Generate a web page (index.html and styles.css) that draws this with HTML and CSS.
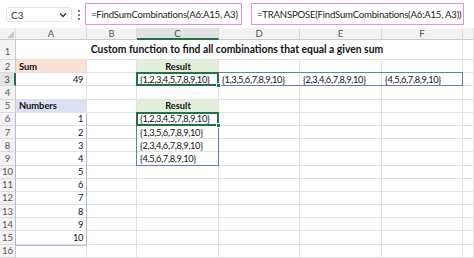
FILE: index.html
```html
<!DOCTYPE html>
<html>
<head>
<meta charset="utf-8">
<link rel="stylesheet" href="styles.css">
</head>
<body>
<div class="topbar">
  <div class="namebox"><span class="nb-text">C3</span>
    <svg class="chev" width="8" height="6" viewBox="0 0 8 6"><path d="M1 1.5 L4 4.5 L7 1.5" fill="none" stroke="#333" stroke-width="1.3"/></svg>
  </div>
  <svg class="dots" width="4" height="12" viewBox="0 0 4 12"><circle cx="2" cy="2" r="1" fill="#555"/><circle cx="2" cy="6" r="1" fill="#555"/><circle cx="2" cy="10" r="1" fill="#555"/></svg>
  <div class="fx fx1">=FindSumCombinations(A6:A15, A3)</div>
  <div class="fx fx2">=TRANSPOSE(FindSumCombinations(A6:A15, A3))</div>
</div>
<div class="sheet-wrap">
<div class="sheet tpl">
  <div class="corner"><svg width="7" height="7" viewBox="0 0 7 7"><path d="M7 0 L7 7 L0 7 Z" fill="#c8c8c8"/></svg></div>
  <div class="ch">A</div><div class="ch">B</div><div class="ch ch-sel">C</div><div class="ch">D</div><div class="ch">E</div><div class="ch">F</div><div class="ch"></div>

  <div class="rh rh-first">1</div><div class="c title">Custom function to find all combinations that equal a given sum</div><div class="c"></div>

  <div class="rh">2</div><div class="c peach">Sum</div><div class="c"></div><div class="c green center">Result</div><div class="c"></div><div class="c"></div><div class="c"></div><div class="c"></div>

  <div class="rh rh-sel">3</div><div class="c num">49</div><div class="c"></div><div class="c">{1,2,3,4,5,7,8,9,10}</div><div class="c">{1,3,5,6,7,8,9,10}</div><div class="c">{2,3,4,6,7,8,9,10}</div><div class="c">{4,5,6,7,8,9,10}</div><div class="c"></div>

  <div class="rh">4</div><div class="c"></div><div class="c"></div><div class="c"></div><div class="c"></div><div class="c"></div><div class="c"></div><div class="c"></div>

  <div class="rh">5</div><div class="c blue">Numbers</div><div class="c"></div><div class="c green center">Result</div><div class="c"></div><div class="c"></div><div class="c"></div><div class="c"></div>

  <div class="rh">6</div><div class="c num">1</div><div class="c"></div><div class="c">{1,2,3,4,5,7,8,9,10}</div><div class="c"></div><div class="c"></div><div class="c"></div><div class="c"></div>
  <div class="rh">7</div><div class="c num">2</div><div class="c"></div><div class="c">{1,3,5,6,7,8,9,10}</div><div class="c"></div><div class="c"></div><div class="c"></div><div class="c"></div>
  <div class="rh">8</div><div class="c num">3</div><div class="c"></div><div class="c">{2,3,4,6,7,8,9,10}</div><div class="c"></div><div class="c"></div><div class="c"></div><div class="c"></div>
  <div class="rh">9</div><div class="c num">4</div><div class="c"></div><div class="c">{4,5,6,7,8,9,10}</div><div class="c"></div><div class="c"></div><div class="c"></div><div class="c"></div>
  <div class="rh">10</div><div class="c num">5</div><div class="c"></div><div class="c"></div><div class="c"></div><div class="c"></div><div class="c"></div><div class="c"></div>
  <div class="rh">11</div><div class="c num">6</div><div class="c"></div><div class="c"></div><div class="c"></div><div class="c"></div><div class="c"></div><div class="c"></div>
  <div class="rh">12</div><div class="c num">7</div><div class="c"></div><div class="c"></div><div class="c"></div><div class="c"></div><div class="c"></div><div class="c"></div>
  <div class="rh">13</div><div class="c num">8</div><div class="c"></div><div class="c"></div><div class="c"></div><div class="c"></div><div class="c"></div><div class="c"></div>
  <div class="rh">14</div><div class="c num">9</div><div class="c"></div><div class="c"></div><div class="c"></div><div class="c"></div><div class="c"></div><div class="c"></div>
  <div class="rh">15</div><div class="c num">10</div><div class="c"></div><div class="c"></div><div class="c"></div><div class="c"></div><div class="c"></div><div class="c"></div>
  <div class="rh">16</div><div class="c"></div><div class="c"></div><div class="c"></div><div class="c"></div><div class="c"></div><div class="c"></div><div class="c"></div>
</div>
<div class="overlay tpl">
  <div class="ov table-border"></div>
  <div class="ov spill spill-row"></div>
  <div class="ov spill spill-col"></div>
  <div class="ov sel sel-1"><span class="handle"></span></div>
  <div class="ov sel sel-2"><span class="handle"></span></div>
</div>
</div>
</body>
</html>
```
FILE: styles.css
```css
* { box-sizing: border-box; }
html, body { margin: 0; padding: 0; background: #fff; }
body {
  width: 474px; height: 258px; overflow: hidden;
  font-family: Lato, "Liberation Sans", sans-serif;
  font-size: 9.3px; color: #111;
}
.topbar {
  height: 28px;
  display: flex; align-items: flex-start;
  padding: 3px 0 0 6px;
  background: #fff;
}
.namebox {
  margin-top: 4px;
  width: 66px; height: 15px;
  border: 1px solid #e4e4e4; border-radius: 3px;
  display: flex; align-items: center; justify-content: space-between;
  padding: 0 4px 0 4px;
  font-size: 10px; color: #333;
}
.dots { margin: 6px 0 0 5px; }
.fx {
  height: 22px;
  border: 1.5px solid #e58fe5;
  display: flex; align-items: center;
  padding: 0 0 0 5px;
  font-size: 9.6px; letter-spacing: -0.22px; color: #222;
  white-space: nowrap; overflow: hidden;
}
.fx1 { margin-left: 4px; width: 157px; }
.fx2 { margin-left: 9px; width: 213px; }

.sheet-wrap { display: grid; }
.tpl {
  grid-area: 1 / 1;
  display: grid;
  grid-template-columns: 16px 71px 50px 82px 81px 82px 81px 1fr;
  grid-template-rows: 12px 20px repeat(15, 13.2px);
}
.sheet { background: #fff; }
.overlay { pointer-events: none; z-index: 2; }
.corner {
  background: #f3f3f3;
  border-right: 1px solid #dadada; border-bottom: 1px solid #c9c9c9;
  display: flex; align-items: flex-end; justify-content: flex-end; padding: 0 1px 1px 0;
}
.ch {
  background: #f3f3f3;
  border-right: 1px solid #dadada; border-bottom: 1px solid #c9c9c9;
  font-size: 9.5px; color: #555; text-align: center; line-height: 11px;
}
.ch-sel { background: #e2e2e2; border-bottom: 2px solid #217346; color: #1e5c38; }
.rh {
  background: #f3f3f3;
  border-right: 1px solid #c9c9c9; border-bottom: 1px solid #dadada;
  font-size: 9.5px; color: #555;
  display: flex; align-items: center; justify-content: center;
}
.rh-first { align-items: flex-end; padding-bottom: 2px; }
.rh-sel { background: #e2e2e2; border-right: 2px solid #217346; color: #1e5c38; }
.c {
  border-right: 1px solid #e1e1e1; border-bottom: 1px solid #e1e1e1;
  padding: 0 2px 0 3px;
  display: flex; align-items: center;
  white-space: nowrap; overflow: visible;
  letter-spacing: -0.35px;
}
.title { grid-column: 2 / 8; justify-content: center; font-weight: 700; font-size: 10.35px; padding: 0 4px 1px 0; letter-spacing: 0; }
.num { justify-content: flex-end; padding-right: 3px; }
.center { justify-content: center; letter-spacing: 0; }
.peach { background: #fbe2d5; font-weight: 700; letter-spacing: 0; }
.blue { background: #d9e1f2; font-weight: 700; letter-spacing: 0; }
.green { background: #e2efda; font-weight: 700; }

.ov { position: relative; }
.table-border { grid-row: 7 / 17; grid-column: 2; border: 1px solid #a9bddf; border-top: none; margin: 0 0 -1px -1px; }
.spill { border: 1px solid #5b80c6; margin: -1px 0 0 -1px; }
.spill-row { grid-row: 4; grid-column: 4 / 8; }
.spill-col { grid-row: 7 / 11; grid-column: 4; }
.sel { border: 2px solid #217346; margin: -1px 0 0 -1px; }
.sel-1 { grid-row: 4; grid-column: 4; }
.sel-2 { grid-row: 7; grid-column: 4; }
.handle {
  position: absolute; right: -4px; bottom: -4px;
  width: 5px; height: 5px; background: #217346; border: 1px solid #fff;
}
```
